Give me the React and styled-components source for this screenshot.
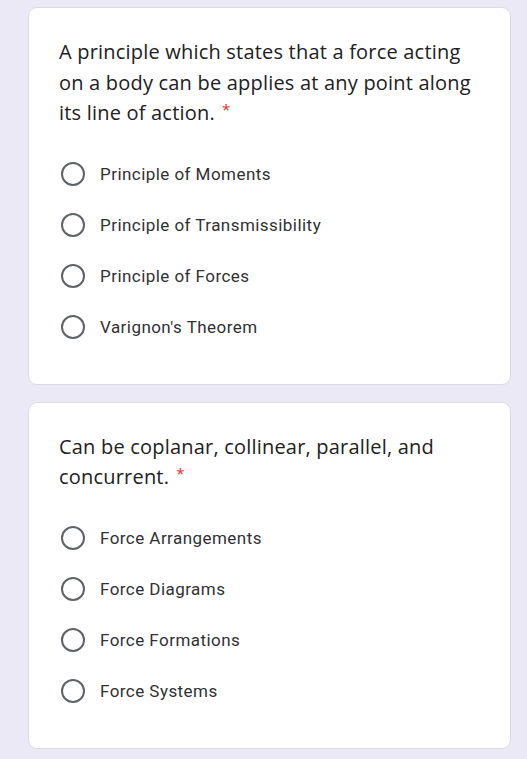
import React from "react";
import styled, { createGlobalStyle } from "styled-components";

const GlobalStyle = createGlobalStyle`
  html, body {
    margin: 0;
    padding: 0;
    background: #ece9f6;
  }
`;

const questions = [
  {
    id: 1,
    title: "A principle which states that a force acting on a body can be applies at any point along its line of action.",
    options: [
      "Principle of Moments",
      "Principle of Transmissibility",
      "Principle of Forces",
      "Varignon's Theorem",
    ],
  },
  {
    id: 2,
    title: "Can be coplanar, collinear, parallel, and concurrent.",
    options: [
      "Force Arrangements",
      "Force Diagrams",
      "Force Formations",
      "Force Systems",
    ],
  },
];

const App = () => {
  return (
    <Page>
      <GlobalStyle />
      {questions.map((q) => (
        <Card key={q.id}>
          <Title>
            {q.title}
            <Required>*</Required>
          </Title>
          <OptionList>
            {q.options.map((opt) => (
              <Option key={opt}>
                <Radio />
                <OptionLabel>{opt}</OptionLabel>
              </Option>
            ))}
          </OptionList>
        </Card>
      ))}
    </Page>
  );
};

export default App;

const Page = styled.div`
  display: flex;
  flex-direction: column;
  gap: 17px;
  padding: 7px 16px 10px 28px;
  min-height: 759px;
  box-sizing: border-box;
`;

const Card = styled.div`
  background: #fff;
  border-radius: 9px;
  border: 1px solid #dcdae3;
  padding: 29px 24px 43px 30px;
  box-sizing: border-box;
`;

const Title = styled.div`
  font-family: "Open Sans", Roboto, sans-serif;
  font-size: 20px;
  line-height: 30.5px;
  color: #202124;
  letter-spacing: 0.2px;
  max-width: 412px;
`;

const Required = styled.span`
  display: inline-block;
  color: #d93025;
  font-size: 15px;
  line-height: 1;
  vertical-align: top;
  margin-top: 4px;
  margin-left: 7px;
`;

const OptionList = styled.div`
  display: flex;
  flex-direction: column;
  gap: 23px;
  margin-top: 31px;
`;

const Option = styled.div`
  display: flex;
  align-items: center;
  height: 28px;
`;

const Radio = styled.div`
  width: 20px;
  height: 20px;
  border: 2.3px solid #5f6368;
  border-radius: 50%;
  margin-left: 2px;
  flex-shrink: 0;
`;

const OptionLabel = styled.span`
  margin-left: 15px;
  font-family: Roboto, sans-serif;
  font-size: 17px;
  color: #303134;
  letter-spacing: 0.45px;
`;
